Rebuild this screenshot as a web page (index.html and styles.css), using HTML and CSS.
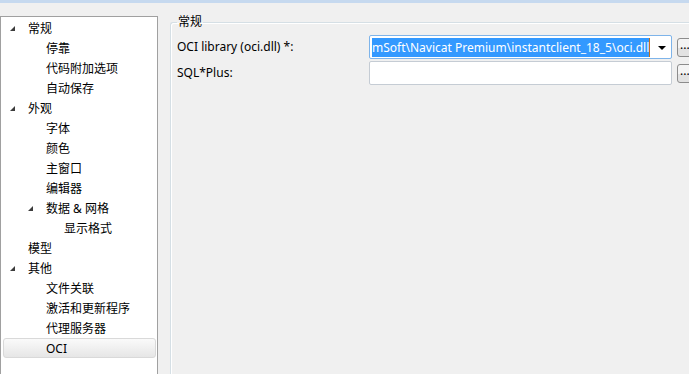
FILE: index.html
```html
<!DOCTYPE html>
<html lang="zh-CN">
<head>
    <meta charset="UTF-8">
    <title>选项</title>
    <link rel="stylesheet" href="styles.css">
</head>
<body>
    <div class="top-strip"></div>
    <div class="main">
        <ul class="tree">
            <li class="node lvl0"><span class="twisty"></span>常规</li>
            <li class="node lvl1">停靠</li>
            <li class="node lvl1">代码附加选项</li>
            <li class="node lvl1">自动保存</li>
            <li class="node lvl0"><span class="twisty"></span>外观</li>
            <li class="node lvl1">字体</li>
            <li class="node lvl1">颜色</li>
            <li class="node lvl1">主窗口</li>
            <li class="node lvl1">编辑器</li>
            <li class="node lvl1"><span class="twisty"></span>数据 &amp; 网格</li>
            <li class="node lvl2">显示格式</li>
            <li class="node lvl0">模型</li>
            <li class="node lvl0"><span class="twisty"></span>其他</li>
            <li class="node lvl1">文件关联</li>
            <li class="node lvl1">激活和更新程序</li>
            <li class="node lvl1">代理服务器</li>
            <li class="node lvl1 selected">OCI</li>
        </ul>

        <div class="pane">
            <fieldset class="group">
                <legend>常规</legend>
                <div class="form-grid">
                    <label>OCI library (oci.dll) *:</label>
                    <div class="combo">
                        <span class="combo-text"><span class="sel">mSoft\Navicat Premium\instantclient_18_5\oci.dll</span><span class="caret"></span></span>
                        <span class="arrow"></span>
                    </div>
                    <button class="browse">...</button>

                    <label>SQL*Plus:</label>
                    <div class="edit"></div>
                    <button class="browse">...</button>
                </div>
            </fieldset>
        </div>
    </div>
</body>
</html>
```

FILE: styles.css
```css
html, body {
    margin: 0;
    height: 100%;
    overflow: hidden;
}

body {
    font-family: 'Noto Sans', 'Noto Sans CJK SC', sans-serif;
    font-size: 12px;
    color: #000;
    background-color: #f0f0f0;
    display: flex;
    flex-direction: column;
}

.top-strip {
    height: 3px;
    background-color: #c6d9ef;
}

.main {
    flex: 1;
    display: flex;
}

/* tree */
.tree {
    list-style: none;
    margin: 13px 0 0 0;
    padding: 1px 0 0 0;
    width: 156px;
    background: #fff;
    border: 1px solid #a0a0a0;
    border-bottom: none;
}

.node {
    position: relative;
    height: 20px;
    line-height: 22px;
    white-space: nowrap;
}

.lvl0 { padding-left: 27px; }
.lvl1 { padding-left: 45px; }
.lvl2 { padding-left: 63px; }

.twisty {
    position: absolute;
    top: 8px;
    width: 0;
    height: 0;
    border-left: 5px solid transparent;
    border-bottom: 5px solid #3c3c3c;
}

.lvl0 .twisty { left: 9px; }
.lvl1 .twisty { left: 27px; }

.selected {
    margin: 0 1px 0 2px;
    padding-left: 42px;
    height: 18px;
    line-height: 20px;
    border: 1px solid #d9d9d9;
    border-radius: 3px;
    background: linear-gradient(#fafafa, #e6e6e6);
}

/* right pane */
.pane {
    flex: 1;
    padding: 11px 0 0 12px;
    min-width: 0;
}

.group {
    margin: 0;
    padding: 5px 0 0 6px;
    height: 100%;
    box-sizing: border-box;
    border: 1px solid #d5dfe5;
    border-right: none;
    border-bottom: none;
    border-radius: 3px 0 0 0;
    box-shadow: inset 1px 1px 0 #fff;
}

.group legend {
    padding: 0 1px;
    margin-left: 0;
    line-height: 16px;
}

.form-grid {
    display: grid;
    grid-template-columns: 187px 303px 22px;
    column-gap: 5px;
    row-gap: 2px;
    align-items: center;
}

.form-grid label {
    line-height: 24px;
}

.combo,
.edit {
    height: 22px;
    background: #fff;
    border: 1px solid #c5ccd4;
    border-radius: 2px;
}

.combo {
    position: relative;
    border-color: #7eb4ea;
}

.combo-text {
    display: flex;
    align-items: center;
    height: 100%;
    padding-left: 2px;
}

.sel {
    background: #3399ff;
    color: #fff;
    line-height: 19px;
    white-space: nowrap;
}

.caret {
    width: 1px;
    height: 19px;
    background: #c07020;
}

.arrow {
    position: absolute;
    right: 5px;
    top: 10px;
    width: 0;
    height: 0;
    border-left: 4px solid transparent;
    border-right: 4px solid transparent;
    border-top: 4px solid #000;
}

.browse {
    height: 19px;
    padding: 0 6px 4px 2px;
    font-family: inherit;
    font-size: 12px;
    line-height: 10px;
    text-align: left;
    border: 1px solid #8c8c8c;
    border-radius: 3px;
    background: linear-gradient(#f4f4f4 50%, #e2e2e2 50%);
}
```
